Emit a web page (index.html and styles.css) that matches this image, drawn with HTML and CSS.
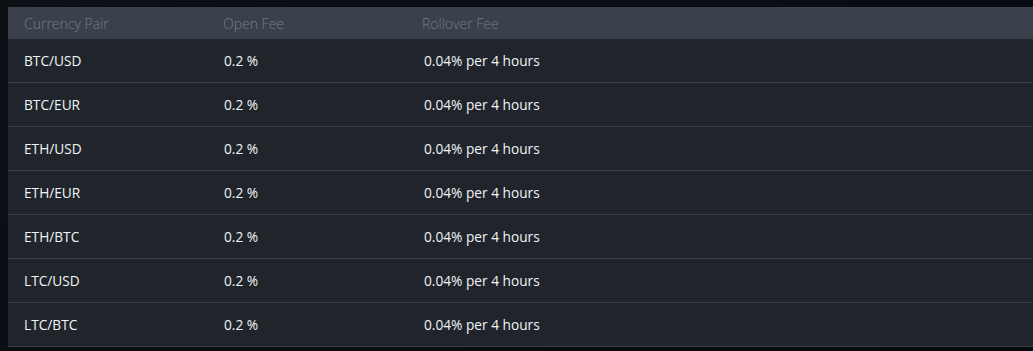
FILE: index.html
```html
<!DOCTYPE html>
<html>
<head>
<meta charset="utf-8">
<link rel="stylesheet" href="styles.css">
</head>
<body>
<div class="page">
  <div class="fees">
    <div class="row head">
      <div class="cell">Currency Pair</div>
      <div class="cell">Open Fee</div>
      <div class="cell">Rollover Fee</div>
    </div>
    <div class="row"><div class="cell">BTC/USD</div><div class="cell">0.2 %</div><div class="cell">0.04% per 4 hours</div></div>
    <div class="row"><div class="cell">BTC/EUR</div><div class="cell">0.2 %</div><div class="cell">0.04% per 4 hours</div></div>
    <div class="row"><div class="cell">ETH/USD</div><div class="cell">0.2 %</div><div class="cell">0.04% per 4 hours</div></div>
    <div class="row"><div class="cell">ETH/EUR</div><div class="cell">0.2 %</div><div class="cell">0.04% per 4 hours</div></div>
    <div class="row"><div class="cell">ETH/BTC</div><div class="cell">0.2 %</div><div class="cell">0.04% per 4 hours</div></div>
    <div class="row"><div class="cell">LTC/USD</div><div class="cell">0.2 %</div><div class="cell">0.04% per 4 hours</div></div>
    <div class="row"><div class="cell">LTC/BTC</div><div class="cell">0.2 %</div><div class="cell">0.04% per 4 hours</div></div>
  </div>
</div>
</body>
</html>
```
FILE: styles.css
```css
html, body {
  margin: 0;
  padding: 0;
  height: 100%;
}
body {
  background: linear-gradient(135deg, #0c0f14 0%, #0a0d12 50%, #06090d 100%);
  font-family: "Open Sans", "Liberation Sans", sans-serif;
  overflow: hidden;
}
.page {
  padding: 7px 0 0 8px;
}
.fees {
  background: #20242b;
}
.row {
  display: grid;
  grid-template-columns: 200px 200px 1fr;
  height: 43px;
  align-items: center;
  padding-left: 16px;
  border-bottom: 1px solid #3a4049;
  color: #f2f4f6;
  font-size: 13.7px;
}
.row.head {
  grid-template-columns: 199px 199px 1fr;
  height: 32px;
  background: #3a414b;
  border-bottom: none;
  color: #717c89;
  font-size: 14px;
  font-weight: 300;
}
.cell {
  white-space: nowrap;
}
```
